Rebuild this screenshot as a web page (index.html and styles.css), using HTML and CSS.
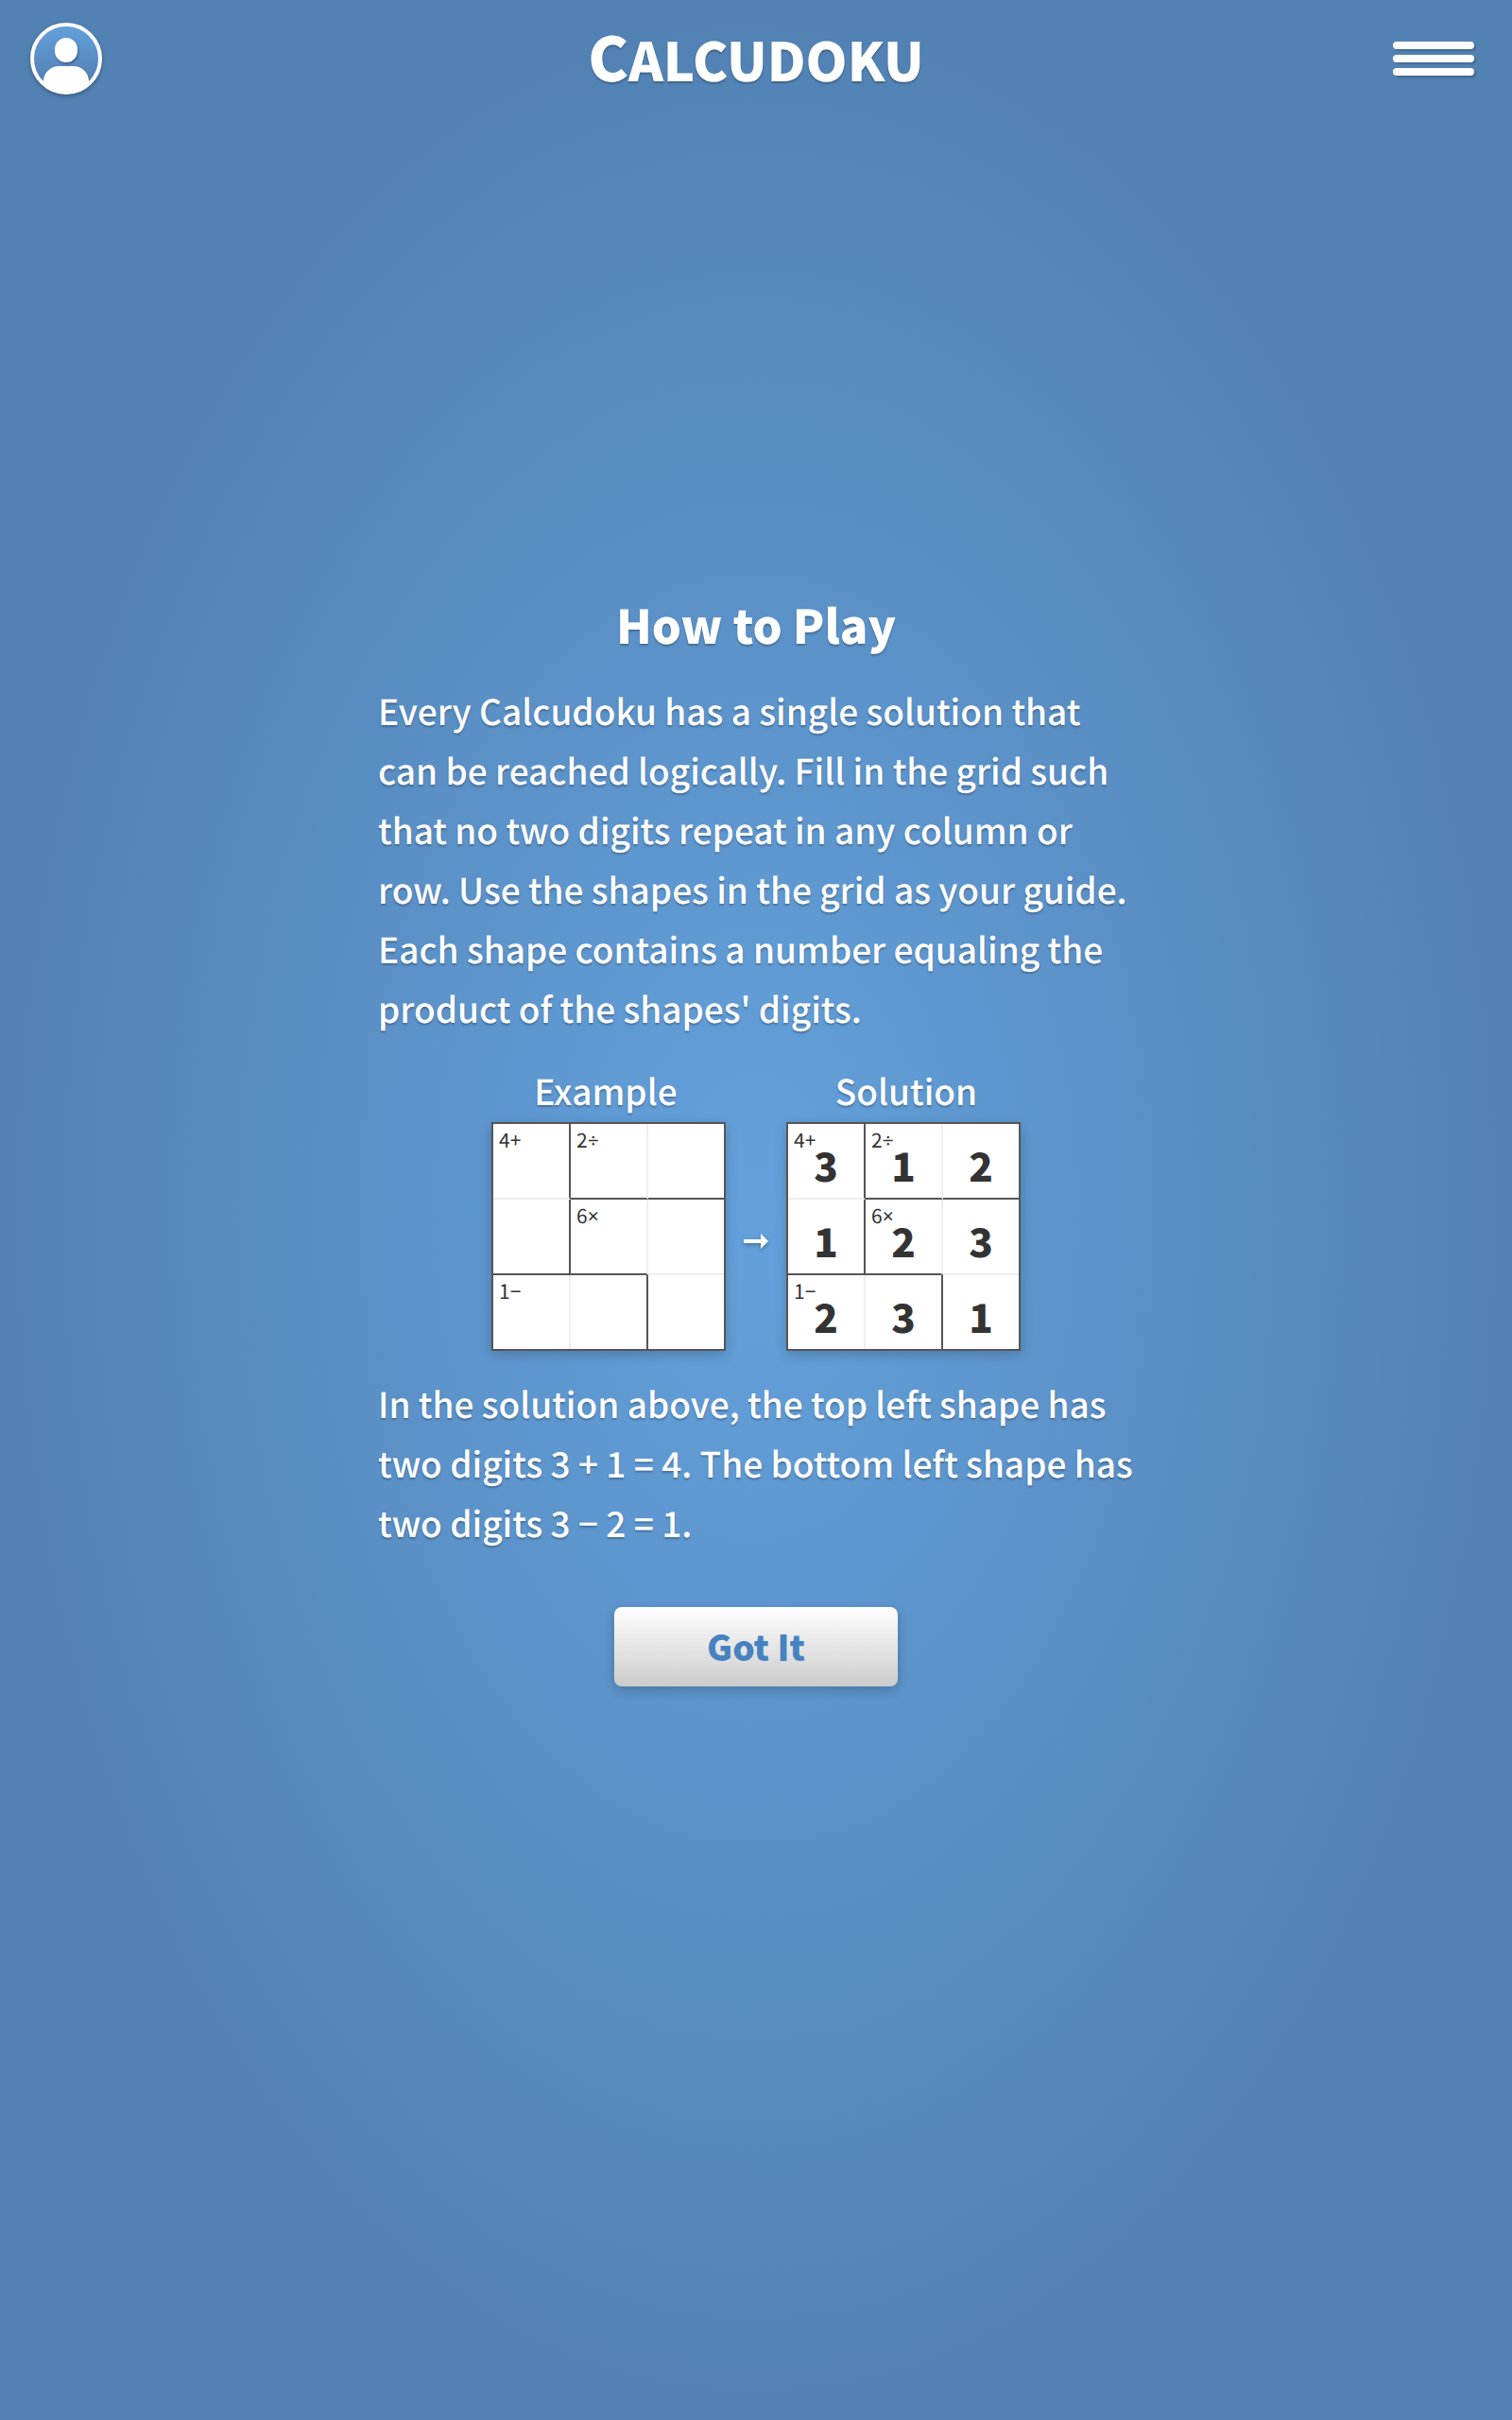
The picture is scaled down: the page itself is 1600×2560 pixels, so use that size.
FILE: index.html
```html
<!DOCTYPE html>
<html lang="en">
<head>
  <meta charset="UTF-8">
  <meta name="viewport" content="width=device-width, initial-scale=1.0">
  <title>Calcudoku</title>
  <link rel="stylesheet" href="styles.css">
</head>
<body>
  <header class="header">
    <button class="icon-button" type="button" aria-label="Account">
      <svg class="avatar" viewBox="0 0 76 76" aria-hidden="true">
        <defs>
          <linearGradient id="avatar-fill" x1="0" y1="0" x2="0" y2="1">
            <stop offset="0" stop-color="#64a1dc"/>
            <stop offset="0.75" stop-color="#5484b9"/>
          </linearGradient>
          <clipPath id="avatar-clip"><circle cx="38" cy="38" r="36"/></clipPath>
        </defs>
        <circle cx="38" cy="38" r="36" fill="url(#avatar-fill)"/>
        <g clip-path="url(#avatar-clip)">
          <rect class="avatar-part" x="26" y="16" width="24" height="26" rx="12"/>
          <rect class="avatar-part" x="14" y="46" width="48" height="40" rx="16"/>
        </g>
        <circle cx="38" cy="38" r="36" fill="none" stroke="#fff" stroke-width="4"/>
      </svg>
    </button>
    <h1 class="logo"><span class="logo-cap">C</span>ALCUDOKU</h1>
    <button class="icon-button menu" type="button" aria-label="Menu">
      <span class="menu-bar"></span>
      <span class="menu-bar"></span>
      <span class="menu-bar"></span>
    </button>
  </header>

  <main class="content">
    <h2 class="title">How to Play</h2>
    <p class="text">Every Calcudoku has a single solution that can be reached logically. Fill in the grid such that no two digits repeat in any column or row. Use the shapes in the grid as your guide. Each shape contains a number equaling the product of the shapes' digits.</p>

    <div class="boards">
      <table class="board">
        <caption>Example</caption>
        <tr>
          <td class="wall-right"><span class="clue">4+</span></td>
          <td class="wall-bottom"><span class="clue">2<span class="sign">÷</span></span></td>
          <td class="wall-bottom"></td>
        </tr>
        <tr>
          <td class="wall-right wall-bottom"></td>
          <td class="wall-bottom"><span class="clue">6<span class="sign">×</span></span></td>
          <td></td>
        </tr>
        <tr>
          <td><span class="clue">1−</span></td>
          <td class="wall-right"></td>
          <td></td>
        </tr>
      </table>

      <svg class="arrow" viewBox="0 0 26 16" aria-hidden="true">
        <path d="M0 6h18V0l8 8-8 8v-6H0z" fill="#fff"/>
      </svg>

      <table class="board solved">
        <caption>Solution</caption>
        <tr>
          <td class="wall-right"><span class="clue">4+</span>3</td>
          <td class="wall-bottom"><span class="clue">2<span class="sign">÷</span></span>1</td>
          <td class="wall-bottom">2</td>
        </tr>
        <tr>
          <td class="wall-right wall-bottom">1</td>
          <td class="wall-bottom"><span class="clue">6<span class="sign">×</span></span>2</td>
          <td>3</td>
        </tr>
        <tr>
          <td><span class="clue">1−</span>2</td>
          <td class="wall-right">3</td>
          <td>1</td>
        </tr>
      </table>
    </div>

    <p class="text">In the solution above, the top left shape has two digits 3 + 1 = 4. The bottom left shape has two digits 3 − 2 = 1.</p>
    <button class="got-it" type="button">Got It</button>
  </main>
</body>
</html>
```
FILE: styles.css
```css
* {
  margin: 0;
  padding: 0;
  box-sizing: border-box;
}

body {
  min-height: 100vh;
  display: flex;
  flex-direction: column;
  font-family: "Source Sans Pro", "Noto Sans CJK SC", sans-serif;
  font-weight: 500;
  text-rendering: geometricPrecision;
  color: #fff;
  text-shadow: 0 2px 2px rgba(0, 0, 0, 0.25);
  background: radial-gradient(#64a1dc, #5282b4 70%);
}

button {
  font-family: inherit;
  border: none;
  cursor: pointer;
}

/* Header */
.header {
  display: grid;
  grid-template-columns: 1fr auto 1fr;
  align-items: center;
  height: 124px;
  padding: 0 32px;
}

.icon-button {
  width: 86px;
  background: none;
}

.avatar {
  display: block;
  width: 76px;
  height: 76px;
  filter: drop-shadow(0 2px 2px rgba(0, 0, 0, 0.3));
}

.avatar-part {
  fill: #fff;
  filter: drop-shadow(1px 2px 1px rgba(0, 0, 0, 0.3));
}

.logo {
  padding-bottom: 2px;
  font-size: 56px;
  line-height: 80px;
  font-weight: 900;
}

.logo-cap {
  font-size: 64px;
}

.menu {
  display: flex;
  flex-direction: column;
  justify-self: end;
  gap: 6px;
  margin-right: 8px;
}

.menu-bar {
  height: 8px;
  border-radius: 4px;
  background: #fff;
  box-shadow: 2px 2px 2px rgba(0, 0, 0, 0.2);
}

/* How to play */
.content {
  flex: 1;
  display: flex;
  flex-direction: column;
  align-items: center;
  justify-content: center;
  width: 50%;
  margin: 0 auto;
  padding-bottom: 278px;
}

.title {
  font-size: 49px;
  line-height: 78px;
  font-weight: 900;
  margin-bottom: 20px;
}

.text {
  width: 100%;
  font-size: 37px;
  line-height: 63px;
}

.boards {
  display: flex;
  align-items: flex-end;
  gap: 19px;
  margin: 24px 0;
}

.board {
  width: 248px;
  border: 2px solid #555;
  border-spacing: 0;
  table-layout: fixed;
  background: #fff;
  color: #333;
  text-shadow: none;
  box-shadow: 0 4px 12px rgba(0, 0, 0, 0.2);
}

.board caption {
  padding: 0 6px 2px 0;
  font-size: 37px;
  line-height: 63px;
  color: #fff;
  text-shadow: 0 2px 2px rgba(0, 0, 0, 0.25);
}

.solved caption {
  padding: 0 0 2px 6px;
}

.board td {
  position: relative;
  width: 82px;
  height: 80px;
  padding-bottom: 4px;
  border: solid #eee;
  border-width: 0 2px 2px 0;
  font-size: 42px;
  line-height: 60px;
  font-weight: 900;
  text-align: center;
  vertical-align: bottom;
}

.board td:last-child {
  width: 80px;
  border-right: none;
}

.board tr:last-child td {
  height: 78px;
  border-bottom: none;
}

/* Walls between shapes */
.board .wall-right {
  border-right-color: #555;
}

.board .wall-bottom {
  border-bottom-color: #555;
}

.clue {
  position: absolute;
  top: 4px;
  left: 6px;
  font-size: 21px;
  line-height: 26px;
  font-weight: 400;
}

.sign {
  font-family: "Noto Sans", sans-serif;
}

.arrow {
  width: 26px;
  height: 16px;
  margin-bottom: 108px;
  filter: drop-shadow(0 2px 2px rgba(0, 0, 0, 0.3));
}

.got-it {
  width: 300px;
  height: 84px;
  margin-top: 58px;
  padding-bottom: 3px;
  border-radius: 8px;
  font-size: 37px;
  font-weight: 900;
  color: #4682c0;
  background: linear-gradient(#fff, #ccc);
  box-shadow: 0 4px 12px rgba(0, 0, 0, 0.2);
}
```
